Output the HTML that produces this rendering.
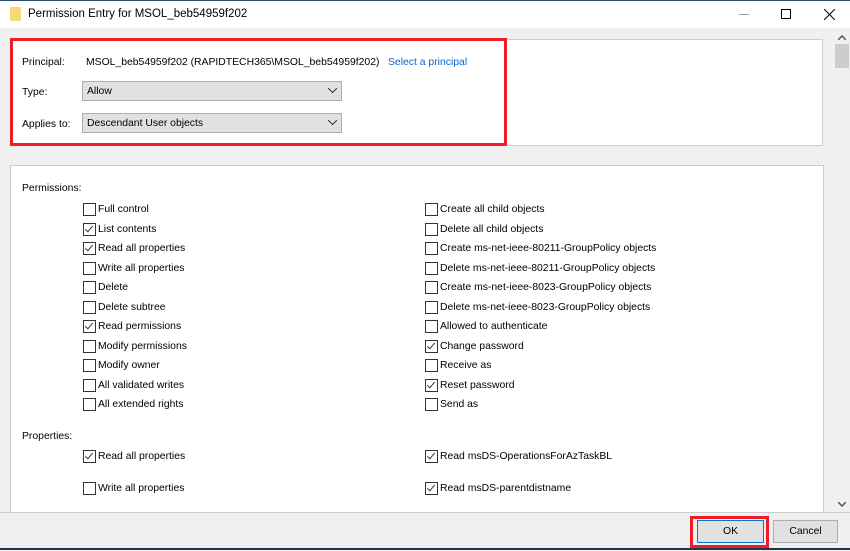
<!DOCTYPE html>
<html><head><style>
body{margin:0;width:850px;height:550px;background:#f0f0f0;font-family:"Liberation Sans",sans-serif;font-size:10.4px;color:#000;position:relative;overflow:hidden}
.a{position:absolute}
.cb{position:absolute;width:11px;height:11px;border:1px solid #333;background:#fff}
.cb.c::after{content:"";position:absolute;left:3px;top:0px;width:3px;height:7px;border:solid #333;border-width:0 1.3px 1.3px 0;transform:rotate(40deg)}
.lb{position:absolute;white-space:nowrap}
.sel{position:absolute;background:#e1e1e1;border:1px solid #adadad;height:20px;line-height:20px;padding-left:4px;box-sizing:border-box}
.sel svg{position:absolute;right:4px;top:6px}
</style></head><body>
<div class="a" style="left:0;top:0;width:850px;height:28px;background:#fff;border-top:1px solid #2b4a6b;box-sizing:border-box"></div>
<div class="a" style="left:10px;top:7px;width:11px;height:14px;background:#f8d775;border-radius:1px"></div>
<div class="lb" style="left:28px;top:8px;font-size:11.5px">Permission Entry for MSOL_beb54959f202</div>
<div class="a" style="left:739px;top:14px;width:10px;height:1px;background:#999"></div>
<div class="a" style="left:781px;top:9px;width:8px;height:8px;border:1px solid #000"></div>
<svg class="a" style="left:824px;top:9px" width="11" height="11"><path d="M0 0L11 11M11 0L0 11" stroke="#000" stroke-width="1"/></svg>

<div class="a" style="left:10px;top:39px;width:813px;height:107px;background:#fff;border:1px solid #ccc;box-sizing:border-box"></div>
<div class="a" style="left:10px;top:38px;width:497px;height:108px;border:3px solid #ee1c25;box-sizing:border-box"></div>
<div class="lb" style="left:22px;top:57px">Principal:</div>
<div class="lb" style="left:86px;top:57px">MSOL_beb54959f202 (RAPIDTECH365\MSOL_beb54959f202)</div>
<div class="lb" style="left:388px;top:57px;color:#0066cc">Select a principal</div>
<div class="lb" style="left:22px;top:87px">Type:</div>
<div class="sel" style="left:82px;top:81px;width:260px">Allow<svg width="9" height="6"><path d="M0 0L4.5 4.5L9 0" fill="none" stroke="#333"/></svg></div>
<div class="lb" style="left:22px;top:119px">Applies to:</div>
<div class="sel" style="left:82px;top:113px;width:260px">Descendant User objects<svg width="9" height="6"><path d="M0 0L4.5 4.5L9 0" fill="none" stroke="#333"/></svg></div>

<div class="a" style="left:10px;top:165px;width:814px;height:360px;background:#fff;border:1px solid #ccc;box-sizing:border-box"></div>
<div class="lb" style="left:22px;top:183px">Permissions:</div>
<div id="rows"></div>
<div class="lb" style="left:22px;top:431px">Properties:</div>

<div class="a" style="left:834px;top:28px;width:16px;height:484px;background:#f0f0f0"></div>
<svg class="a" style="left:838px;top:35px" width="8" height="5"><path d="M0 5L4 1L8 5" fill="none" stroke="#555" stroke-width="1.5"/></svg>
<div class="a" style="left:835px;top:44px;width:14px;height:24px;background:#cdcdcd"></div>
<svg class="a" style="left:838px;top:502px" width="8" height="5"><path d="M0 0L4 4L8 0" fill="none" stroke="#555" stroke-width="1.5"/></svg>

<div class="a" style="left:0;top:512px;width:850px;height:38px;background:#f0f0f0;border-top:1px solid #ccc"></div>
<div class="a" style="left:690px;top:516px;width:79px;height:32px;border:3px solid #ee1c25;box-sizing:border-box"></div>
<div class="a" style="left:697px;top:520px;width:67px;height:23px;background:#e1e1e1;border:1px solid #0078d7;box-sizing:border-box;text-align:center;line-height:22px">OK</div>
<div class="a" style="left:773px;top:520px;width:65px;height:23px;background:#e1e1e1;border:1px solid #adadad;box-sizing:border-box;text-align:center;line-height:22px">Cancel</div>
<div class="a" style="left:0;top:548px;width:850px;height:2px;background:#1f3550"></div>
<script>
var L=[["Full control",0],["List contents",1],["Read all properties",1],["Write all properties",0],["Delete",0],["Delete subtree",0],["Read permissions",1],["Modify permissions",0],["Modify owner",0],["All validated writes",0],["All extended rights",0]];
var R=[["Create all child objects",0],["Delete all child objects",0],["Create ms-net-ieee-80211-GroupPolicy objects",0],["Delete ms-net-ieee-80211-GroupPolicy objects",0],["Create ms-net-ieee-8023-GroupPolicy objects",0],["Delete ms-net-ieee-8023-GroupPolicy objects",0],["Allowed to authenticate",0],["Change password",1],["Receive as",0],["Reset password",1],["Send as",0]];
var h="";
function row(x,y,t,c){h+='<div class="cb'+(c?' c':'')+'" style="left:'+x+'px;top:'+(y-1)+'px"></div><div class="lb" style="left:'+(x+15)+'px;top:'+y+'px">'+t+'</div>';}
for(var i=0;i<11;i++){var y=204+i*19.5;row(83,y,L[i][0],L[i][1]);row(425,y,R[i][0],R[i][1]);}
row(83,451,"Read all properties",1);row(425,451,"Read msDS-OperationsForAzTaskBL",1);
row(83,483,"Write all properties",0);row(425,483,"Read msDS-parentdistname",1);
document.getElementById("rows").innerHTML=h;
</script>
</body></html>
